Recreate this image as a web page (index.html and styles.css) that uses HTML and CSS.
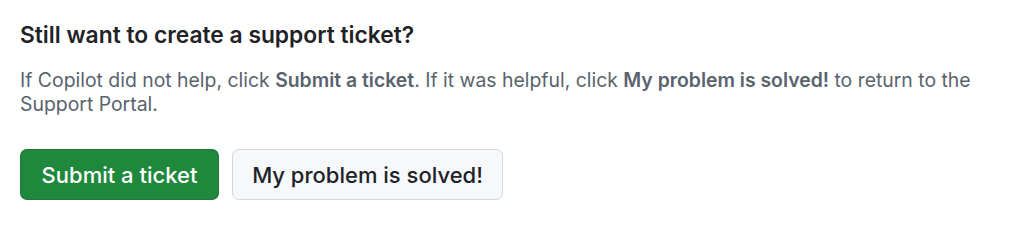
FILE: index.html
```html
<!DOCTYPE html>
<html lang="en">
<head>
<meta charset="utf-8">
<link rel="stylesheet" href="styles.css">
</head>
<body>
<section class="panel">
  <h2 class="title">Still want to create a support ticket?</h2>
  <p class="desc">If Copilot did not help, click <strong>Submit a ticket</strong>. If it was helpful, click <strong>My problem is solved!</strong> to return to the Support Portal.</p>
  <div class="actions">
    <button class="btn btn-primary" type="button">Submit a ticket</button>
    <button class="btn btn-default" type="button">My problem is solved!</button>
  </div>
</section>
</body>
</html>
```
FILE: styles.css
```css
html, body {
  margin: 0;
  background: #ffffff;
}
body {
  font-family: Inter, "Noto Sans", "Liberation Sans", sans-serif;
  color: #1f2328;
}
.panel {
  padding: 21px 20px 0 20px;
  width: 975px;
}
.title {
  margin: 0;
  font-size: 22.8px;
  line-height: 28px;
  font-weight: 600;
  color: #1f2328;
}
.desc {
  margin: 19px 0 0 0;
  font-size: 19.4px;
  line-height: 24px;
  color: #59636e;
}
.desc strong {
  font-weight: 600;
}
.actions {
  display: flex;
  gap: 13px;
  margin-top: 33px;
}
.btn {
  font-family: inherit;
  font-size: 22px;
  font-weight: 500;
  height: 51px;
  padding: 0 12px;
  border-radius: 7px;
  border: 1px solid transparent;
  white-space: nowrap;
  cursor: pointer;
}
.btn-primary {
  background: #1f883d;
  color: #ffffff;
  border-color: rgba(31, 35, 40, 0.15);
  width: 199px;
}
.btn-default {
  background: #f6f8fa;
  color: #1f2328;
  border-color: #d1d9e0;
  width: 271px;
}
```
